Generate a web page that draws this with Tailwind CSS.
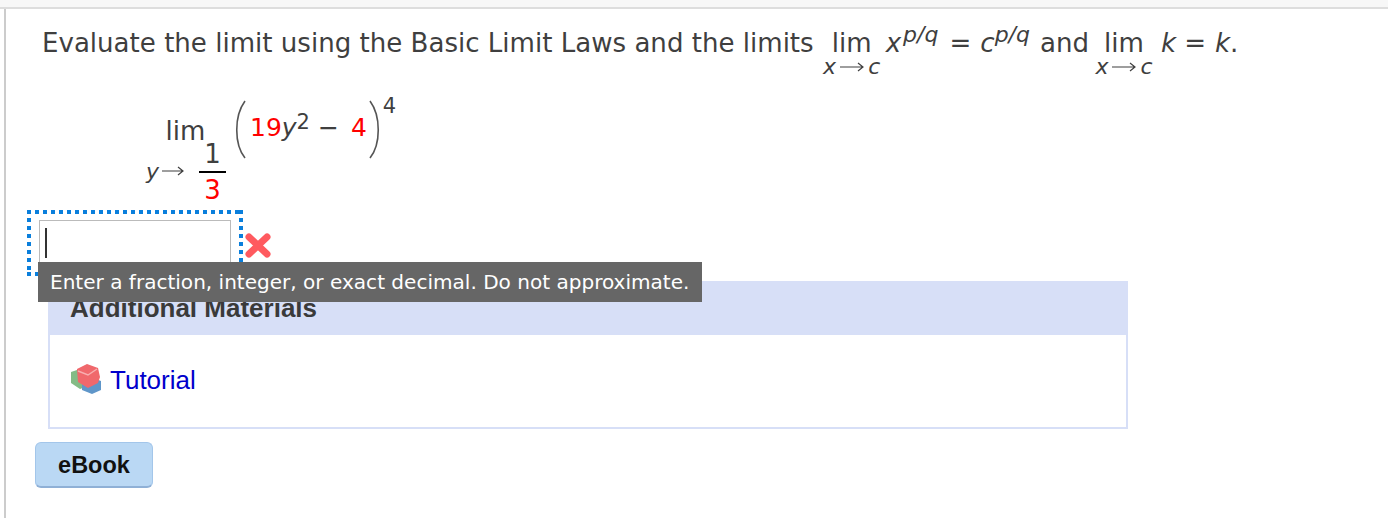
<!DOCTYPE html>
<html lang="en">
<head>
  <meta charset="UTF-8" />
  <title>Limit question</title>
  <script src="https://cdn.jsdelivr.net/npm/@tailwindcss/browser@4"></script>
</head>
<body class="bg-white overflow-hidden font-['DejaVu_Sans',sans-serif] text-[#3f3f3f]">
  <div class="h-[9px] bg-[#f7f7f7] border-b-2 border-[#dddddd]"></div>
  <div class="ml-[4px] border-l-2 border-[#cccccc] h-[509px] relative">
    <!-- question line -->
    <div class="flex items-start pl-[36px] pt-[18px] text-[26.07px] leading-[32px] h-[92px] whitespace-nowrap">
      <span>Evaluate the limit using the Basic Limit Laws and the limits</span>
      <div class="flex flex-col items-center ml-[9px] w-[58px]">
        <span>lim</span>
        <span class="text-[22px] leading-[16px] italic flex items-center">x<svg class="w-[26px] h-[12px] mx-[3px]" viewBox="0 0 26 12" fill="none" stroke="#3f3f3f" stroke-width="1.2"><path d="M1 6h23M19 2l5 4-5 4"/></svg>c</span>
      </div>
      <span class="italic ml-[5px]">x</span>
      <span class="italic text-[22px] leading-[20px] -mt-[2px] ml-[2px]">p/q</span>
      <span class="ml-[11px]">=</span>
      <span class="italic ml-[9px]">c</span>
      <span class="italic text-[22px] leading-[20px] -mt-[2px]">p/q</span>
      <span class="ml-[10px]">and</span>
      <div class="flex flex-col items-center ml-[6px] w-[58px]">
        <span>lim</span>
        <span class="text-[22px] leading-[16px] italic flex items-center">x<svg class="w-[26px] h-[12px] mx-[3px]" viewBox="0 0 26 12" fill="none" stroke="#3f3f3f" stroke-width="1.2"><path d="M1 6h23M19 2l5 4-5 4"/></svg>c</span>
      </div>
      <span class="italic ml-[8px]">k</span>
      <span class="ml-[8px]">=</span>
      <span class="italic ml-[9px]">k</span>
      <span>.</span>
    </div>
    <!-- limit expression -->
    <div class="flex items-start pl-[137px] h-[109px] text-[26px] whitespace-nowrap">
      <div class="flex flex-col items-center w-[86px]">
        <span class="leading-[32px] mt-[14px] mr-[1px]">lim</span>
        <div class="flex items-center -my-[10px]">
          <span class="italic text-[22px] -mt-[2px]">y</span>
          <svg class="w-[24px] h-[12px] ml-[2px] -mt-[3px]" viewBox="0 0 24 12" fill="none" stroke="#3f3f3f" stroke-width="1.2"><path d="M1 6h21M17 2l5 4-5 4"/></svg>
          <div class="flex flex-col items-center ml-[14px] w-[27px] leading-[34px]">
            <span class="border-b-2 border-black w-full text-center">1</span>
            <span class="text-[#ff0000]">3</span>
          </div>
        </div>
      </div>
      <div class="flex items-center h-[60px] text-[25px] mt-[-1px] ml-[3px]">
        <svg class="w-[14px] h-[60px] shrink-0" viewBox="0 0 14 60" fill="none" stroke="#555555" stroke-width="1.6"><path d="M13 1C2 16 2 44 13 58"/></svg>
        <span class="text-[#ff0000] ml-[4px] -mt-[5px]">19</span><span class="italic -mt-[5px]">y</span>
        <span class="text-[21px] leading-[20px] mb-[16px]">2</span>
        <span class="ml-[8px] -mt-[5px]">−</span>
        <span class="text-[#ff0000] ml-[12px] -mt-[5px]">4</span>
        <svg class="w-[14px] h-[60px] shrink-0 ml-[2px]" viewBox="0 0 14 60" fill="none" stroke="#555555" stroke-width="1.6"><path d="M1 1C12 16 12 44 1 58"/></svg>
      </div>
      <span class="text-[21px] leading-[20px] mt-[-5px]">4</span>
    </div>
    <!-- answer box -->
    <div class="flex items-start pl-[21px] h-[71px]">
      <div class="relative w-[216px] h-[66px] pl-[12px] pt-[10px]">
        <svg class="absolute inset-0 w-[216px] h-[66px]" viewBox="0 0 216 66" fill="none" stroke="#0a7fdc" stroke-width="4" stroke-dasharray="4 4"><path d="M0 2H216M214 0V66M2 0V66M0 64H216"/></svg>
        <div class="relative w-[192px] h-[60px] border border-[#bbbbbb] bg-white pl-[5px] pt-[7px]">
          <div class="w-[2px] h-[30px] bg-[#333333]"></div>
        </div>
      </div>
      <svg class="w-[28px] h-[28px] mt-[22px] ml-[1px] blur-[0.5px]" viewBox="0 0 28 28"><path d="M5 5l18 17M23 5L5 22" stroke="#ff5a5f" stroke-width="7" stroke-linecap="round"/></svg>
    </div>
    <!-- additional materials -->
    <div class="ml-[42px] w-[1080px] h-[148px] border-2 border-t-0 border-[#d7dff7]">
      <div class="h-[54px] bg-[#d7dff7] pl-[20px] pt-[12px] text-[26px] leading-[30px] font-bold text-[#3a3a3a] font-['Liberation_Sans',sans-serif]">Additional Materials</div>
      <div class="flex items-center pl-[19px] pt-[29px]">
        <svg class="w-[34px] h-[32px] -mt-[3px] blur-[0.6px]" viewBox="0 0 34 32">
          <path d="M2 9l9-3 8 5v12l-8 3-9-6z" fill="#84bb86"/>
          <path d="M13 18l9-4 10 4v9l-9 4-10-4z" fill="#5f96c9"/>
          <path d="M8 6l10-5 11 4 2 9-2 6-10 5-10-6z" fill="#f0686c"/>
          <path d="M9 8l10 4 9-6" fill="none" stroke="#f8aeb0" stroke-width="1.5"/>
        </svg>
        <span class="ml-[7px] text-[#0000cc] text-[26px] leading-[32px] font-['Liberation_Sans',sans-serif]">Tutorial</span>
      </div>
    </div>
    <!-- ebook -->
    <div class="ml-[29px] mt-[13px] pt-[2px] w-[118px] h-[46px] rounded-[6px] bg-[#bad8f4] border border-[#a3c6ea] border-b-2 border-b-[#8fb0d6] flex items-center justify-center font-['Liberation_Sans',sans-serif] font-bold text-[23.5px] text-[#111111]">eBook</div>
    <!-- tooltip -->
    <div class="absolute left-[32px] top-[253px] h-[40px] w-[664px] bg-[#666666] text-white text-[20.06px] leading-[41px] pl-[12px] whitespace-nowrap">Enter a fraction, integer, or exact decimal. Do not approximate.</div>
  </div>
</body>
</html>
